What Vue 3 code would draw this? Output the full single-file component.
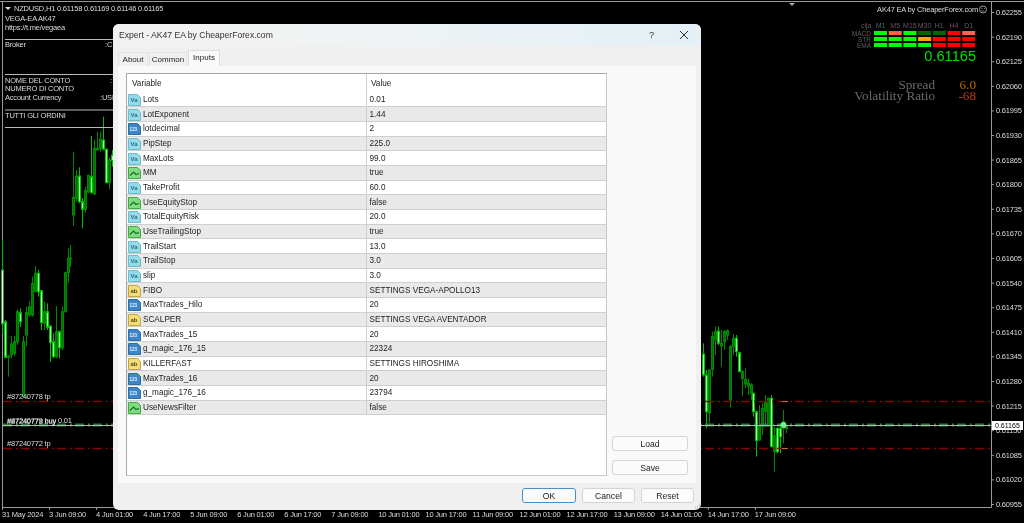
<script setup>
// candles read off the chart: [x, high, low, bodyTop, bodyBottom, bright]
const leftRaw = [
  [7, 360, 640, 450, 612, 2], [16, 600, 715, 605, 712, 1], [25, 705, 770, 708, 712, 0], [34, 648, 715, 672, 705, 0],
  [43, 648, 708, 665, 700, 0], [52, 568, 675, 575, 665, 0], [61, 565, 620, 578, 605, 1], [70, 648, 830, 665, 830, 0],
  [79, 560, 678, 578, 645, 0], [88, 545, 590, 560, 585, 0], [96, 470, 590, 490, 585, 0], [105, 438, 515, 460, 515, 0],
  [114, 450, 530, 460, 515, 1], [123, 510, 630, 512, 608, 1], [132, 545, 630, 575, 610, 0], [140, 550, 630, 575, 622, 1],
  [149, 615, 725, 618, 668, 1], [158, 640, 715, 665, 710, 1], [167, 558, 715, 635, 710, 0], [176, 632, 715, 635, 683, 1],
  [185, 560, 690, 575, 683, 0], [194, 455, 578, 458, 575, 0], [203, 385, 488, 415, 458, 0], [211, 375, 440, 414, 417, 0],
  [220, 95, 318, 232, 285, 0], [229, 150, 245, 168, 235, 0], [238, 142, 250, 168, 245, 1], [247, 235, 325, 245, 268, 1],
  [256, 200, 278, 212, 268, 0], [265, 165, 220, 166, 215, 0], [273, 48, 220, 170, 218, 1], [282, 60, 225, 85, 222, 0],
  [291, 35, 90, 85, 90, 0], [299, 35, 95, 58, 85, 0], [308, -10, 90, 60, 88, 1], [317, 85, 190, 88, 188, 1],
  [326, 112, 208, 120, 188, 0], [335, 90, 140, 105, 122, 1]
]
const rightRaw = [
  [9, 70, 170, 102, 165, 1], [18, 150, 325, 165, 275, 1], [27, 150, 310, 150, 278, 0], [36, 35, 170, 50, 148, 0],
  [45, 20, 105, 35, 60, 0], [54, 20, 75, 33, 70, 1], [63, 30, 140, 70, 78, 0], [72, 30, 90, 35, 65, 0],
  [80, 28, 60, 32, 45, 0], [89, 75, 262, 80, 240, 0], [98, 42, 105, 55, 80, 0], [107, 45, 110, 55, 95, 1],
  [116, 95, 155, 98, 155, 1], [125, 150, 228, 155, 175, 0], [134, 145, 205, 178, 192, 0], [143, 175, 225, 190, 198, 0],
  [152, 190, 240, 195, 220, 0], [160, 218, 290, 220, 275, 1], [169, 272, 410, 275, 362, 1], [178, 255, 362, 320, 360, 0],
  [187, 250, 345, 265, 320, 0], [196, 225, 320, 245, 275, 0], [205, 235, 320, 235, 318, 0], [214, 225, 382, 235, 380, 1],
  [222, 320, 455, 348, 395, 0], [231, 322, 400, 325, 395, 1], [240, 320, 400, 325, 350, 1], [249, 270, 370, 305, 325, 0],
  [258, 318, 340, 320, 326, 0]
]
const toCandle = (ox, oy) => ([x, h, l, t, b, kind]) => ({
  x: Math.round(ox + x / 3),
  high: oy + h / 3,
  low: oy + l / 3,
  top: oy + t / 3,
  height: Math.max((b - t) / 3, 1),
  kind
})
const candles = [...leftRaw.map(toCandle(0, 120)), ...rightRaw.map(toCandle(700, 320))]

const prices = ['0.62255', '0.62190', '0.62125', '0.62060', '0.61995', '0.61930', '0.61865', '0.61800', '0.61735', '0.61670', '0.61605',
  '0.61540', '0.61475', '0.61410', '0.61345', '0.61280', '0.61215', '0.61150', '0.61085', '0.61020', '0.60955']
const dates = ['31 May 2024', '3 Jun 09:00', '4 Jun 01:00', '4 Jun 17:00', '5 Jun 09:00', '6 Jun 01:00', '6 Jun 17:00', '7 Jun 09:00', '10 Jun 01:00',
  '10 Jun 17:00', '11 Jun 09:00', '12 Jun 01:00', '12 Jun 17:00', '13 Jun 09:00', '14 Jun 01:00', '14 Jun 17:00', '17 Jun 09:00']

const g = '#00ff00', t = '#ff6347', d = '#006400', r = '#ff0000', o = '#ffa500'
const periods = ['M1', 'M5', 'M15', 'M30', 'H1', 'H4', 'D1']
const signals = [
  { label: 'MACD', y: 31, cells: [g, t, g, d, d, r, t] },
  { label: 'STR', y: 37, cells: [g, g, g, o, r, r, r] },
  { label: 'EMA', y: 43, cells: [g, g, g, g, r, r, r] }
]

const inputs = [
  ['va', 'Lots', '0.01'], ['va', 'LotExponent', '1.44'], ['int', 'lotdecimal', '2'], ['va', 'PipStep', '225.0'],
  ['va', 'MaxLots', '99.0'], ['bool', 'MM', 'true'], ['va', 'TakeProfit', '60.0'], ['bool', 'UseEquityStop', 'false'],
  ['va', 'TotalEquityRisk', '20.0'], ['bool', 'UseTrailingStop', 'true'], ['va', 'TrailStart', '13.0'], ['va', 'TrailStop', '3.0'],
  ['va', 'slip', '3.0'], ['str', 'FIBO', 'SETTINGS VEGA-APOLLO13'], ['int', 'MaxTrades_Hilo', '20'], ['str', 'SCALPER', 'SETTINGS VEGA AVENTADOR'],
  ['int', 'MaxTrades_15', '20'], ['int', 'g_magic_176_15', '22324'], ['str', 'KILLERFAST', 'SETTINGS HIROSHIMA'], ['int', 'MaxTrades_16', '20'],
  ['int', 'g_magic_176_16', '23794'], ['bool', 'UseNewsFilter', 'false']
]
</script>

<template>
  <div class="terminal">
    <svg class="chart" width="1024" height="523" viewBox="0 0 1024 523">
      <!-- frame -->
      <path class="frame" d="M0 1.5H1024M2.5 2V507.5H991.5V2" />

      <!-- candles -->
      <g v-for="(c, i) in candles" :key="i">
        <line class="wick" :class="{ lit: c.kind }" :x1="c.x + 0.5" :x2="c.x + 0.5" :y1="c.high" :y2="c.low" />
        <rect :class="['body', 'k' + c.kind]" :x="c.x - 0.5" :y="c.top" width="2" :height="c.height" />
      </g>

      <!-- order lines -->
      <line class="sl" x1="3" x2="991" y1="401.5" y2="401.5" />
      <line class="sl" x1="3" x2="991" y1="448.5" y2="448.5" />
      <line class="entry" x1="3" x2="991" y1="425" y2="425" />
      <line class="bid" x1="3" x2="991" y1="425.5" y2="425.5" />
      <path class="tick-mark" d="M782 401.5h6M782 448.5h6" />
      <circle cx="783.5" cy="425" r="3" fill="#60ff90" />
      <circle cx="784" cy="427" r="1" fill="#ff80b0" />
      <polygon points="789,3 795,3 792,6" fill="#9ab" />

      <text class="t" x="7" y="399">#87240778 tp</text>
      <text class="t" x="7" y="422.5">#87240779 buy 0.01</text>
      <text class="t" x="7" y="424">#87240778 buy</text>
      <text class="t" x="7" y="446">#87240772 tp</text>

      <!-- left panel -->
      <polygon points="5,7 11,7 8,10" fill="#ddd" />
      <text class="t" x="14" y="11">NZDUSD,H1  0.61158 0.61169 0.61146 0.61165</text>
      <text class="t" x="5" y="20.5">VEGA-EA AK47</text>
      <text class="t" x="5" y="29.5">https://t.me/vegaea</text>
      <path class="rule" d="M5 39.5H113M5 74.5H113M5 110H113M5 127.5H113" />
      <text class="t" x="5" y="46.5">Broker</text>
      <text class="t" x="105" y="46.5">:C</text>
      <text class="t" x="5" y="82.5">NOME DEL CONTO</text>
      <text class="t" x="110" y="82.5">:</text>
      <text class="t" x="5" y="91">NUMERO DI CONTO</text>
      <text class="t" x="5" y="100">Account Currency</text>
      <text class="t" x="100" y="100">:USD</text>
      <text class="t" x="5" y="117.5">TUTTI GLI ORDINI</text>

      <!-- dashboard -->
      <text class="t end" x="978" y="12">AK47 EA by CheaperForex.com</text>
      <circle cx="983" cy="9.5" r="3.5" fill="none" stroke="#999" />
      <path d="M981.5 8.5h1M984 8.5h1M981.5 11h3" stroke="#999" stroke-width="0.8" fill="none" />
      <text class="dim" x="861" y="28">cija</text>
      <text v-for="(p, i) in periods" :key="p" class="dim mid" :x="880.5 + i * 14.7" y="28">{{ p }}</text>
      <g v-for="s in signals" :key="s.label">
        <text class="dim small end" x="871" :y="s.y + 4.5">{{ s.label }}</text>
        <rect v-for="(c, i) in s.cells" :key="i" :x="874 + i * 14.7" :y="s.y" width="13" height="4" :fill="c" />
      </g>
      <text class="quote" x="976" y="61">0.61165</text>
      <text class="serif end grey" x="935" y="88.5">Spread</text>
      <text class="serif end grey" x="935" y="99.5">Volatility Ratio</text>
      <text class="serif end amber" x="976" y="88.5">6.0</text>
      <text class="serif end rust" x="976" y="99.5">-68</text>

      <!-- axes -->
      <g v-for="(p, i) in prices" :key="p">
        <line class="frame" x1="992" x2="994" :y1="12.5 + i * 24.6" :y2="12.5 + i * 24.6" />
        <text class="t" x="996" :y="15 + i * 24.6">{{ p }}</text>
      </g>
      <g v-for="(d, i) in dates" :key="d">
        <line class="frame" :x1="2.5 + i * 47.05" :x2="2.5 + i * 47.05" y1="507" y2="510" />
        <text class="t" :x="2 + i * 47.05" y="516.5">{{ d }}</text>
      </g>
      <rect x="992" y="421" width="31" height="9" fill="#fff" />
      <text class="price-tag" x="995" y="428">0.61165</text>
    </svg>

    <div class="dialog">
      <div class="titlebar">
        <span class="title">Expert - AK47 EA by CheaperForex.com</span>
        <span class="help">?</span>
        <svg class="close" width="10" height="10" viewBox="0 0 10 10">
          <path d="M1 1L9 9M9 1L1 9" stroke="#333" stroke-width="1" />
        </svg>
      </div>

      <div class="tabs">
        <span class="tab">About</span>
        <span class="tab">Common</span>
        <span class="tab active">Inputs</span>
      </div>

      <div class="panel">
        <div class="table">
          <div class="row head">
            <span class="name">Variable</span>
            <span class="value">Value</span>
          </div>
          <div v-for="(item, i) in inputs" :key="item[1]" class="row" :class="{ odd: i % 2 }">
            <span class="name">
              <svg class="icon" width="13" height="13" viewBox="0 0 13 13">
                <template v-if="item[0] === 'va'">
                  <path d="M0.5 1.5h9l3 3v8h-12z" fill="#93dbe8" stroke="#6bbccd" />
                  <text class="ico-text" x="2.5" y="9" fill="#2d6f88">Va</text>
                </template>
                <template v-else-if="item[0] === 'int'">
                  <path d="M0.5 1.5h9l3 3v8h-12z" fill="#3d87c8" stroke="#2c6ea8" />
                  <text class="ico-text small" x="1.5" y="9" fill="#eef">123</text>
                </template>
                <template v-else-if="item[0] === 'str'">
                  <path d="M0.5 1.5h9l3 3v8h-12z" fill="#f2dc7c" stroke="#c2a53c" />
                  <text class="ico-text" x="2.5" y="9" fill="#5a4a10">ab</text>
                </template>
                <template v-else>
                  <path d="M0.5 1.5h9l3 3v8h-12z" fill="#80dc80" stroke="#45a845" />
                  <path d="M2 9.5L5.5 6L8 8.5L11 7.5" fill="none" stroke="#1d6b2a" stroke-width="1.2" />
                </template>
              </svg>
              {{ item[1] }}
            </span>
            <span class="value">{{ item[2] }}</span>
          </div>
        </div>
        <div class="side">
          <button class="btn">Load</button>
          <button class="btn">Save</button>
        </div>
      </div>

      <div class="footer">
        <button class="btn default">OK</button>
        <button class="btn">Cancel</button>
        <button class="btn">Reset</button>
      </div>
      <svg class="grip" width="7" height="7" viewBox="0 0 7 7">
        <path d="M5 1h1M3 3h1M5 3h1M1 5h1M3 5h1M5 5h1" stroke="#aaa" stroke-width="1" />
      </svg>
    </div>
  </div>
</template>

<style>
html, body {
  margin: 0;
  background: #000;
  overflow: hidden;
}
</style>

<style scoped>
.terminal {
  position: relative;
  width: 1024px;
  height: 523px;
  background: #000;
  overflow: hidden;
  font-family: "Liberation Sans", Arial, sans-serif;
  filter: blur(0.3px);
}

.chart {
  display: block;
}

.frame {
  stroke: #9a9a9a;
  stroke-width: 1;
  fill: none;
}

.rule {
  stroke: #bbb;
  stroke-width: 1;
  fill: none;
}

.wick {
  stroke: #008a00;
  stroke-width: 1;
}

.wick.lit {
  stroke: #00c000;
}

.body {
  stroke: #008a00;
  stroke-width: 1;
  fill: #007000;
}

.body.k1 {
  stroke: #00c000;
  fill: #a0ffa0;
}

.body.k2 {
  stroke: #30a030;
  fill: #f0fff0;
}

.sl {
  stroke: #8c0000;
  stroke-width: 1.4;
  stroke-dasharray: 9 4 2 3;
}

.entry {
  stroke: #2a7a40;
  stroke-width: 3;
  stroke-dasharray: 9 4 2 3;
}

.bid {
  stroke: #b0b8b0;
  stroke-width: 1;
}

.tick-mark {
  stroke: #a08040;
  stroke-width: 1;
  fill: none;
}

.t {
  font-size: 7.5px;
  letter-spacing: -0.2px;
  fill: #dcdcdc;
  white-space: pre;
}

.dim {
  font-size: 7px;
  fill: #5e5e5e;
}

.dim.small {
  font-size: 6.5px;
}

.end {
  text-anchor: end;
}

.mid {
  text-anchor: middle;
}

.quote {
  font-size: 14.6px;
  fill: #00e000;
  text-anchor: end;
}

.serif {
  font-family: "Liberation Serif", serif;
  font-size: 13.2px;
}

.grey {
  fill: #6a6a6a;
}

.amber {
  fill: #b9660f;
}

.rust {
  fill: #c0390f;
}

.price-tag {
  font-size: 7px;
  fill: #000;
}

.dialog {
  position: absolute;
  left: 113px;
  top: 24px;
  width: 588px;
  height: 486px;
  box-sizing: border-box;
  display: flex;
  flex-direction: column;
  background: #f0f0f0;
  border-radius: 6px;
  overflow: hidden;
  font-size: 8.2px;
  color: #222;
}

.titlebar {
  height: 22px;
  flex: none;
  display: flex;
  align-items: center;
  padding: 0 12px 0 6px;
  background: linear-gradient(90deg, #f2f1f0, #f0f3f4 40%, #e4f0f6);
}

.title {
  flex: 1;
  font-size: 8.6px;
  color: #333;
}

.help {
  margin-right: 25px;
  font-size: 9px;
  color: #333;
}

.tabs {
  height: 20px;
  flex: none;
  box-sizing: border-box;
  display: flex;
  align-items: flex-end;
  gap: 1px;
  padding-left: 5px;
}

.tab {
  width: 30px;
  height: 14px;
  box-sizing: border-box;
  text-align: center;
  line-height: 13px;
  font-size: 8px;
  background: #f0f0f0;
  border: 1px solid #e4e4e4;
  border-bottom: none;
}

.tab:nth-child(2) {
  width: 38px;
}

.tab.active {
  width: 32px;
  height: 16px;
  line-height: 14px;
  background: #f9f9f9;
  border-color: #ddd;
}

.panel {
  margin: 0 5px;
  height: 417px;
  flex: none;
  box-sizing: border-box;
  display: flex;
  gap: 5px;
  padding: 7px 8px 7px 8px;
  background: #f9f9f9;
}

.table {
  width: 482px;
  height: 403px;
  box-sizing: border-box;
  background: #fff;
  border: 1px solid #a6a6a6;
  border-right-color: #c8c8c8;
  border-bottom-color: #c8c8c8;
}

.row {
  display: flex;
  height: 14.68px;
  box-sizing: border-box;
  border-bottom: 1px solid #cfcfcf;
  align-items: center;
}

.row.odd {
  background: #e9e9e9;
}

.row.head {
  height: 18.5px;
  border-bottom: none;
}

.name {
  width: 240px;
  height: 100%;
  flex: none;
  display: flex;
  align-items: center;
  gap: 2px;
  padding-left: 1px;
  box-sizing: border-box;
  border-right: 1px solid #cfcfcf;
}

.head .name {
  padding-left: 5px;
}

.value {
  padding-left: 2.5px;
}

.head .value {
  padding-left: 4px;
}

.icon {
  flex: none;
}

.ico-text {
  font-size: 6px;
  font-weight: 700;
}

.ico-text.small {
  font-size: 4.5px;
}

.side {
  display: flex;
  flex-direction: column;
  justify-content: flex-end;
  gap: 9px;
  padding-bottom: 1px;
}

.btn {
  width: 76px;
  height: 15px;
  padding: 0;
  font: inherit;
  font-size: 8.6px;
  color: #222;
  background: #fbfbfb;
  border: 1px solid #d4d4d4;
  border-radius: 3px;
}

.footer {
  display: flex;
  justify-content: flex-end;
  gap: 6px;
  padding: 5px 7px 0 0;
}

.footer .btn {
  width: 53px;
}

.footer .btn.default {
  width: 54px;
  border-color: #4a90c8;
}

.grip {
  position: absolute;
  right: 0;
  bottom: 0;
}
</style>
